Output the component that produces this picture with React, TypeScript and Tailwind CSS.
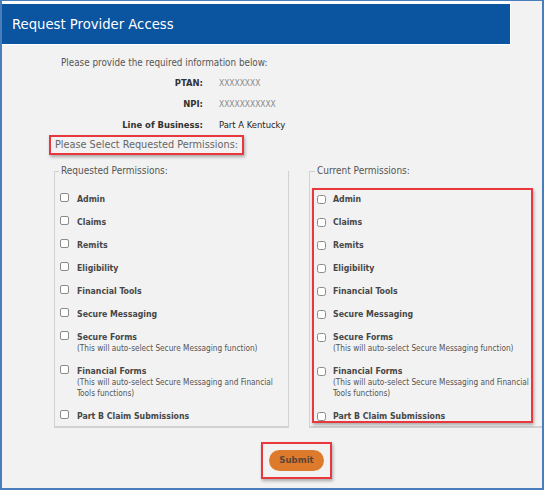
import React from 'react';

const permissions = [
    { name: "Admin", notes: [] as string[] },
    { name: "Claims", notes: [] },
    { name: "Remits", notes: [] },
    { name: "Eligibility", notes: [] },
    { name: "Financial Tools", notes: [] },
    { name: "Secure Messaging", notes: [] },
    { name: "Secure Forms", notes: ["(This will auto-select Secure Messaging function)"] },
    { name: "Financial Forms", notes: ["(This will auto-select Secure Messaging and Financial", "Tools functions)"] },
    { name: "Part B Claim Submissions", notes: [] },
];

const font = "font-['DejaVu_Sans_Condensed','DejaVu_Sans',sans-serif]";

function PermissionList({ boxClass, gap }: { boxClass: string; gap: string }) {
    return (
        <div className="flex flex-col">
            {permissions.map((p, idx) => (
                <div key={idx} className={`flex items-start ${gap} ${p.notes.length ? 'pb-[11px]' : 'h-[23px]'}`}>
                    <span className={`shrink-0 border border-[#8a8a8a] bg-white ${boxClass}`} />
                    <div className="flex flex-col whitespace-nowrap">
                        <span className="text-[8.7px] font-bold leading-[12px] text-[#474747]">{p.name}</span>
                        {p.notes.map((n, nIdx) => (
                            <span key={nIdx} className="text-[8.2px] leading-[11px] text-[#555]">{n}</span>
                        ))}
                    </div>
                </div>
            ))}
        </div>
    );
}

export default function App() {
    return (
        <div className={`h-[490px] w-[544px] overflow-hidden border-b-2 border-l-2 border-r-2 border-t border-[#4a7ebb] bg-[#f2f2f2] ${font}`}>
            <div className="w-[509px] bg-white pb-[1px] pr-[1px] pt-[3px]">
                <div className="flex h-[40px] items-center bg-[#0a54a0] pl-[10px]">
                    <h1 className="text-[14.7px] text-white">Request Provider Access</h1>
                </div>
            </div>

            <div className="pl-[59px] pt-[12px] text-[9.8px] leading-[12px] text-[#555]">Please provide the required information below:</div>

            <div className="ml-[51px] mt-[8px] grid grid-cols-[150px_1fr] gap-x-[16px] gap-y-[9px] text-[9.4px]">
                <span className="text-right font-bold leading-[12px] text-[#333]">PTAN:</span>
                <span className="text-[8.4px] leading-[12px] text-[#888]">XXXXXXXX</span>
                <span className="text-right font-bold leading-[12px] text-[#333]">NPI:</span>
                <span className="text-[8.4px] leading-[12px] text-[#888]">XXXXXXXXXXX</span>
                <span className="text-right font-bold leading-[12px] text-[#333]">Line of Business:</span>
                <span className="leading-[12px] text-[#222]">Part A Kentucky</span>
            </div>

            <div className="ml-[47px] mt-[2px] inline-block border-2 border-[#e8383d] px-[4px] py-[1px] text-[10.8px] leading-[14px] text-[#666] shadow-[1px_2px_3px_rgba(0,0,0,0.3)]">
                Please Select Requested Permissions:
            </div>

            <div className="mt-[16px] flex items-start">
                <div className="ml-[52px] flex h-[257px] w-[235px] shrink-0 flex-col border-b-2 border-l border-r border-[#d2d2d2]">
                    <div className="-mt-[7px] flex items-center">
                        <span className="h-px w-[4px] bg-[#cfcfcf]" />
                        <span className="px-[2px] text-[10px] leading-[14px] text-[#555]">Requested Permissions:</span>
                    </div>
                    <div className="mt-[15px] pl-[5px]">
                        <PermissionList boxClass="h-[9px] w-[9px] rounded-[2px]" gap="gap-[8px]" />
                    </div>
                </div>

                <div className="ml-[20px] flex h-[257px] w-[240px] shrink-0 flex-col border-b-2 border-l border-[#d2d2d2]">
                    <div className="-mt-[7px] flex items-center">
                        <span className="h-px w-[5px] bg-[#cfcfcf]" />
                        <span className="px-[2px] text-[10px] leading-[14px] text-[#555]">Current Permissions:</span>
                    </div>
                    <div className="ml-[2px] mt-[10px] h-[235px] w-[221px] border-2 border-[#e8383d] pl-[3px] pt-[3px] shadow-[1px_2px_3px_rgba(0,0,0,0.3)]">
                        <PermissionList boxClass="mt-[2px] h-[9px] w-[9px] rounded-[2.5px]" gap="gap-[7px]" />
                    </div>
                </div>
            </div>

            <div className="ml-[259px] mt-[14px] inline-flex border-2 border-[#e8383d] px-[6px] py-[6px] shadow-[1px_2px_3px_rgba(0,0,0,0.3)]">
                <button className="h-[21px] w-[55px] rounded-full bg-[#dd7a2c] text-[9.5px] font-bold text-[#5a4636]">Submit</button>
            </div>
        </div>
    );
}
